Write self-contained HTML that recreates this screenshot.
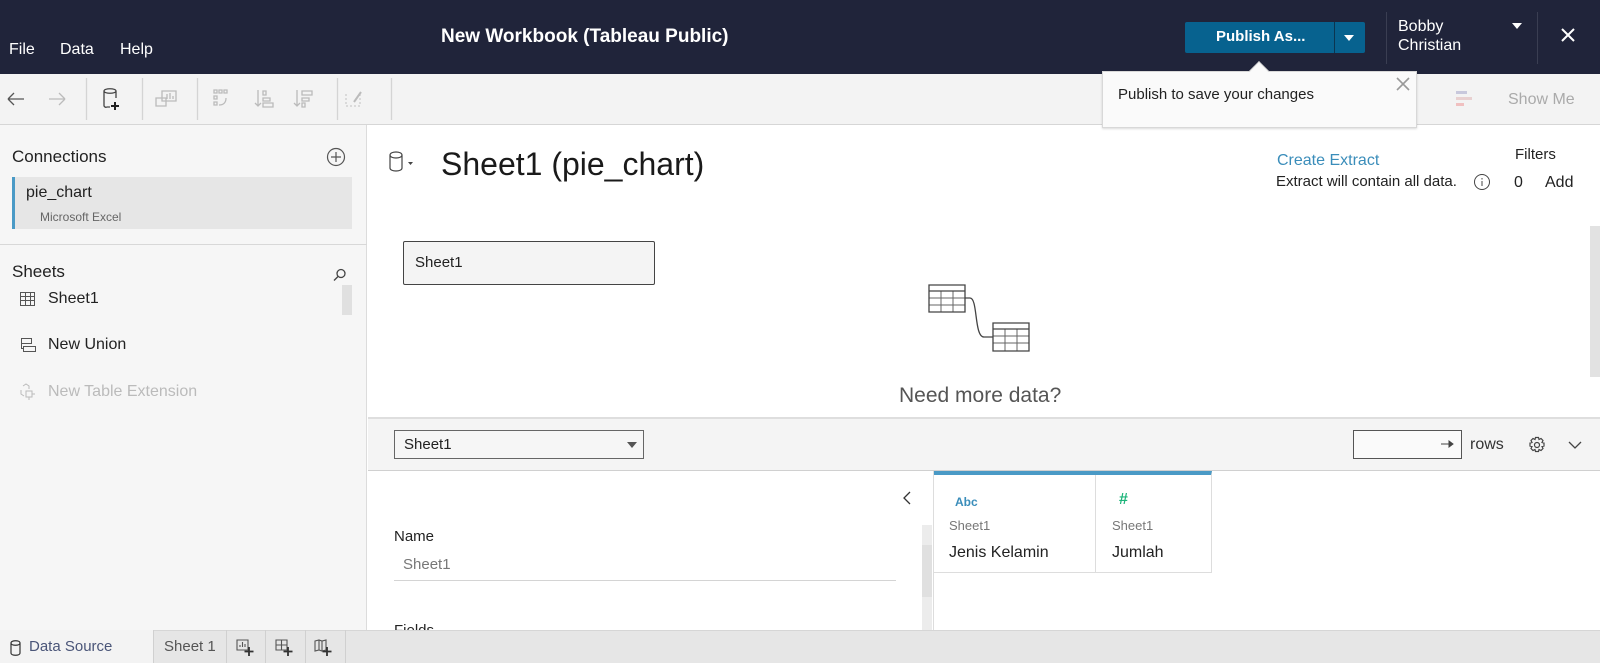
<!DOCTYPE html>
<html><head><meta charset="utf-8"><style>
*{margin:0;padding:0;box-sizing:border-box}
body{width:1600px;height:663px;overflow:hidden;position:relative;font-family:"Liberation Sans",sans-serif;background:#fff;color:#222}
.a{position:absolute}
.t{position:absolute;white-space:nowrap}
</style></head><body>
<!-- top bar -->
<div class="a" style="left:0;top:0;width:1600px;height:74px;background:#20243a"></div>
<div class="t" style="left:9px;top:41px;color:#fff;font-size:16px">File</div>
<div class="t" style="left:60px;top:41px;color:#fff;font-size:16px">Data</div>
<div class="t" style="left:120px;top:41px;color:#fff;font-size:16px">Help</div>
<div class="t" style="left:441px;top:26px;color:#fff;font-size:19px;font-weight:bold">New Workbook (Tableau Public)</div>
<div class="a" style="left:1185px;top:22px;width:180px;height:31px;background:#07628f;border-radius:2px"></div>
<div class="a" style="left:1334px;top:22px;width:1px;height:31px;background:#0b3550"></div>
<div class="t" style="left:1216px;top:28px;color:#fff;font-size:15px;font-weight:bold">Publish As...</div>
<div class="a" style="left:1344px;top:35px;border-left:5px solid transparent;border-right:5px solid transparent;border-top:6px solid #fff"></div>
<div class="a" style="left:1386px;top:12px;width:1px;height:52px;background:#3a3e52"></div>
<div class="a" style="left:1537px;top:12px;width:1px;height:52px;background:#3a3e52"></div>
<div class="t" style="left:1398px;top:17px;color:#fff;font-size:16px;line-height:19px">Bobby<br>Christian</div>
<div class="a" style="left:1512px;top:23px;border-left:5px solid transparent;border-right:5px solid transparent;border-top:6px solid #fff"></div>
<svg class="a" style="left:1560px;top:27px" width="16" height="16"><path d="M2 2L14 14M14 2L2 14" stroke="#fff" stroke-width="2"/></svg>
<!-- toolbar -->
<div class="a" style="left:0;top:74px;width:1600px;height:51px;background:#f3f3f3;border-bottom:1px solid #d6d6d6"></div>
<svg class="a" style="left:0;top:74px" width="400" height="50" fill="none" stroke-width="1.3">
<path d="M8 25H24M8 25L14 19M8 25L14 31" stroke="#555"/>
<path d="M49 25H65M65 25L59 19M65 25L59 31" stroke="#bbb"/>
<path d="M104 17v14a2 2 0 0 0 3 2h3M104 17c0-3 12-3 12 0v7M104 17c0 3 12 3 12 0" stroke="#444"/>
<path d="M115 28v8M111 32h8" stroke="#222" stroke-width="2"/>
<path d="M162 17h14v10h-14zM156 24h10v8h-10zM167 20v5M170 19v6M173 22v3" stroke="#bbb"/>
<path d="M214 16h3v3h-3zM219 16h3v3h-3zM224 16h3v3h-3zM214 22h3v3h-3zM214 28h3v3h-3zM226 24c0 5-3 7-7 7" stroke="#bbb"/>
<path d="M258 16v16M255 29l3 3 3-3M263 17h3v4h-3zM263 24h7v3h-7zM263 29h10v4h-10z" stroke="#bbb"/>
<path d="M297 16v16M294 29l3 3 3-3M302 17h10v4h-10zM302 24h7v3h-7zM302 29h3v4h-3z" stroke="#bbb"/>
<path d="M346 20v12h14V20" stroke="#ccc" stroke-dasharray="2 2"/><path d="M354 28l7-10" stroke="#bbb" stroke-width="2"/>
<path d="M86.5 4v42M142.5 4v42M197.5 4v42M337.5 4v42M391.5 4v42" stroke="#d4d4d4"/>
</svg>
<div class="a" style="left:1456px;top:91px;width:11px;height:3px;background:#c8c8dc"></div>
<div class="a" style="left:1456px;top:97px;width:16px;height:3px;background:#e8d0d0"></div>
<div class="a" style="left:1456px;top:103px;width:8px;height:3px;background:#f0c0c0"></div>
<div class="t" style="left:1508px;top:91px;color:#aaa;font-size:16px">Show Me</div>
<!-- popover -->
<div class="a" style="left:1102px;top:71px;width:315px;height:57px;background:#fafafa;border:1px solid #d8d8d8;box-shadow:0 1px 2px rgba(0,0,0,.15)"></div>
<div class="a" style="left:1252px;top:64px;width:14px;height:14px;background:#fafafa;transform:rotate(45deg);border-left:1px solid #d8d8d8;border-top:1px solid #d8d8d8"></div>
<div class="t" style="left:1118px;top:86px;font-size:15px;color:#222">Publish to save your changes</div>
<svg class="a" style="left:1396px;top:77px" width="14" height="14"><path d="M1 1L13 13M13 1L1 13" stroke="#999" stroke-width="1.6"/></svg>
<!-- left panel -->
<div class="a" style="left:0;top:125px;width:367px;height:505px;background:#f6f6f6;border-right:1px solid #dcdcdc"></div>
<div class="t" style="left:12px;top:147px;font-size:17px;color:#222">Connections</div>
<svg class="a" style="left:326px;top:147px" width="20" height="20" fill="none" stroke="#555" stroke-width="1.2"><circle cx="10" cy="10" r="8.5"/><path d="M10 5v10M5 10h10"/></svg>
<div class="a" style="left:12px;top:177px;width:340px;height:52px;background:#e6e6e6;border-left:3px solid #4a9ac6"></div>
<div class="t" style="left:26px;top:184px;font-size:16px">pie_chart</div>
<div class="t" style="left:40px;top:210px;font-size:12px;color:#666">Microsoft Excel</div>
<div class="a" style="left:0;top:244px;width:367px;height:1px;background:#d8d8d8"></div>
<div class="t" style="left:12px;top:262px;font-size:17px">Sheets</div>
<svg class="a" style="left:333px;top:268px" width="14" height="14" fill="none" stroke="#444" stroke-width="1.3"><circle cx="8" cy="5.5" r="4"/><path d="M5 8.5L1 12.5"/></svg>
<div class="a" style="left:342px;top:285px;width:10px;height:30px;background:#e0e0e0"></div>
<svg class="a" style="left:20px;top:291px" width="16" height="16" fill="none" stroke="#555"><path d="M.5 1.5h14v13H.5zM.5 5.5h14M.5 9.5h14M5.5 1.5v13M10.5 1.5v13"/></svg>
<div class="t" style="left:48px;top:290px;font-size:16px">Sheet1</div>
<svg class="a" style="left:20px;top:337px" width="16" height="16" fill="none" stroke="#555"><path d="M1.5 1.5h10v5h-10zM3.5 9.5h12v5h-12zM1.5 6.5v5h2"/></svg>
<div class="t" style="left:48px;top:336px;font-size:16px">New Union</div>
<svg class="a" style="left:19px;top:383px" width="18" height="18" fill="none" stroke="#bbb"><path d="M4 3l3-2 3 2v3M2 7v4l3 2M7 8h6v6H7zM13 11h3M10 14v3"/></svg>
<div class="t" style="left:48px;top:383px;font-size:16px;color:#bbb">New Table Extension</div>
<!-- main top -->
<svg class="a" style="left:388px;top:150px" width="28" height="26" fill="none" stroke="#444" stroke-width="1.2"><path d="M2 5v13c0 4 12 4 12 0V5M2 5c0-4 12-4 12 0M2 5c0 4 12 4 12 0"/><path d="M20 12h5l-2.5 3z" fill="#444" stroke="none"/></svg>
<div class="t" style="left:441px;top:146px;font-size:32px;color:#1a1a1a">Sheet1 (pie_chart)</div>
<div class="t" style="left:1277px;top:152px;font-size:16px;color:#3a8dba">Create Extract</div>
<div class="t" style="left:1276px;top:173px;font-size:15px;color:#222">Extract will contain all data.</div>
<svg class="a" style="left:1473px;top:173px" width="18" height="18" fill="none" stroke="#444"><circle cx="9" cy="9" r="7.5"/><path d="M9 8v5M9 5v1.5"/></svg>
<div class="t" style="left:1515px;top:146px;font-size:15px">Filters</div>
<div class="t" style="left:1514px;top:174px;font-size:16px">0</div>
<div class="t" style="left:1545px;top:174px;font-size:16px">Add</div>
<div class="a" style="left:403px;top:241px;width:252px;height:44px;background:#f4f4f4;border:1px solid #444;border-radius:2px"></div>
<div class="t" style="left:415px;top:254px;font-size:15px">Sheet1</div>
<div class="a" style="left:1590px;top:226px;width:10px;height:151px;background:#e2e2e2"></div>
<svg class="a" style="left:925px;top:282px" width="110" height="74" fill="none" stroke="#444" stroke-width="1.3"><path d="M4 3h36v27H4zM4 9h36M4 16h36M4 23h36M16 9v21M28 9v21" stroke="#666" stroke-width="1"/><path d="M4 3h36v27H4zM4 9h36"/><path d="M68 41h36v28H68zM68 47h36M68 54h36M68 61h36M80 47v22M92 47v22" stroke="#666" stroke-width="1"/><path d="M68 41h36v28H68zM68 47h36"/><path d="M40 16h5c8 0 4 39 14 39h9"/></svg>
<div class="t" style="left:899px;top:384px;font-size:21px;color:#555">Need more data?</div>
<!-- middle strip -->
<div class="a" style="left:368px;top:417px;width:1232px;height:54px;background:#f4f4f4;border-top:2px solid #dedede;border-bottom:1px solid #d0d0d0"></div>
<div class="a" style="left:394px;top:430px;width:250px;height:29px;border:1px solid #666;background:#f6f6f6"></div>
<div class="t" style="left:404px;top:436px;font-size:15px">Sheet1</div>
<div class="a" style="left:627px;top:442px;border-left:5px solid transparent;border-right:5px solid transparent;border-top:6px solid #555"></div>
<div class="a" style="left:1353px;top:430px;width:109px;height:29px;border:1px solid #555;background:#fafafa"></div>
<svg class="a" style="left:1440px;top:438px" width="16" height="12"><path d="M1 6h12M13 6l-4-3v6z" stroke="#444" fill="#444"/></svg>
<div class="t" style="left:1470px;top:436px;font-size:16px;color:#333">rows</div>
<svg class="a" style="left:1528px;top:436px" width="18" height="18" fill="none" stroke="#444" stroke-width="1.2"><circle cx="9" cy="9" r="2.5"/><path d="M7.5 1.5h3l.5 2 2-1 2 2-1 2 2 .5v3l-2 .5 1 2-2 2-2-1-.5 2h-3l-.5-2-2 1-2-2 1-2-2-.5v-3l2-.5-1-2 2-2 2 1z"/></svg>
<svg class="a" style="left:1568px;top:440px" width="14" height="10" fill="none" stroke="#444" stroke-width="1.3"><path d="M1 2l6 6 6-6"/></svg>
<!-- lower -->
<svg class="a" style="left:902px;top:491px" width="10" height="14" fill="none" stroke="#333" stroke-width="1.3"><path d="M8 1L2 7l6 6"/></svg>
<div class="t" style="left:394px;top:528px;font-size:15px;color:#222">Name</div>
<div class="t" style="left:403px;top:556px;font-size:15px;color:#777">Sheet1</div>
<div class="a" style="left:394px;top:580px;width:502px;height:1px;background:#d4d4d4"></div>
<div class="t" style="left:394px;top:622px;font-size:15px;color:#222">Fields</div>
<div class="a" style="left:922px;top:525px;width:10px;height:105px;background:#ececec"></div>
<div class="a" style="left:922px;top:545px;width:10px;height:52px;background:#e0e0e0"></div>
<div class="a" style="left:933px;top:471px;width:1px;height:159px;background:#ddd"></div>
<div class="a" style="left:934px;top:471px;width:278px;height:102px;border-top:4px solid #4a9ac6;border-right:1px solid #ddd;border-bottom:1px solid #ddd"></div>
<div class="a" style="left:1095px;top:475px;width:1px;height:98px;background:#ddd"></div>
<div class="t" style="left:955px;top:495px;font-size:12px;color:#3a8dba;font-weight:bold">Abc</div>
<div class="t" style="left:949px;top:518px;font-size:13px;color:#777">Sheet1</div>
<div class="t" style="left:949px;top:544px;font-size:16px">Jenis Kelamin</div>
<div class="t" style="left:1119px;top:491px;font-size:16px;color:#1db47a;font-weight:bold">#</div>
<div class="t" style="left:1112px;top:518px;font-size:13px;color:#777">Sheet1</div>
<div class="t" style="left:1112px;top:544px;font-size:16px">Jumlah</div>
<!-- bottom tabs -->
<div class="a" style="left:0;top:630px;width:1600px;height:33px;background:#e6e6e6;border-top:1px solid #d6d6d6"></div>
<div class="a" style="left:0;top:630px;width:154px;height:33px;background:#f3f3f3;border-right:1px solid #d0d0d0"></div>
<svg class="a" style="left:10px;top:640px" width="12" height="16" fill="none" stroke="#333" stroke-width="1.2"><path d="M1 3v10c0 3 9 3 9 0V3M1 3c0-3 9-3 9 0M1 3c0 3 9 3 9 0"/></svg>
<div class="t" style="left:29px;top:638px;font-size:15px;color:#4a5578">Data Source</div>
<div class="a" style="left:226px;top:630px;width:1px;height:33px;background:#d0d0d0"></div>
<div class="a" style="left:265px;top:630px;width:1px;height:33px;background:#d0d0d0"></div>
<div class="a" style="left:305px;top:630px;width:1px;height:33px;background:#d0d0d0"></div>
<div class="a" style="left:345px;top:630px;width:1px;height:33px;background:#d0d0d0"></div>
<div class="t" style="left:164px;top:638px;font-size:15px;color:#555">Sheet 1</div>
<svg class="a" style="left:236px;top:638px" width="120" height="20" fill="none" stroke="#555" stroke-width="1.1"><path d="M1 2h11v10H1zM4 9V7M6.5 9V4M9 9V6"/><path d="M13 9v9M8.5 13.5h9" stroke="#333" stroke-width="1.8"/><path d="M40 2h11v10H40zM40 7h11M45.5 2v10"/><path d="M52 9v9M47.5 13.5h9" stroke="#333" stroke-width="1.8"/><path d="M79 3l4-1 3 1 4-1v10l-4 1-3-1-4 1zM83 2v10M86 3v10"/><path d="M91 9v9M86.5 13.5h9" stroke="#333" stroke-width="1.8"/></svg>
</body></html>
